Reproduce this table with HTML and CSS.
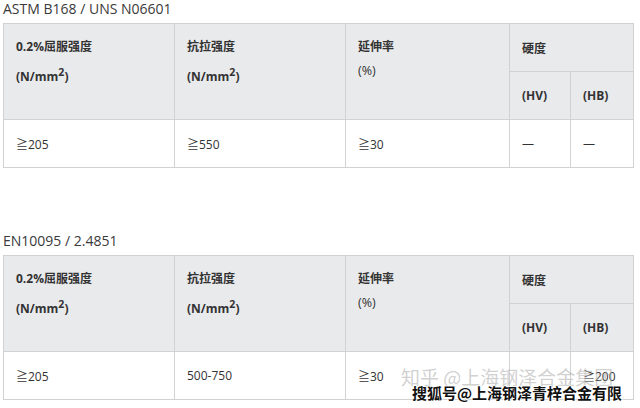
FILE: index.html
```html
<!DOCTYPE html>
<html>
<head>
<meta charset="utf-8">
<link rel="stylesheet" href="styles.css">
</head>
<body>
<div class="page">
  <section class="block">
    <div class="title">ASTM B168 / UNS N06601</div>
    <table class="spec">
      <colgroup><col class="c1"><col class="c2"><col class="c3"><col class="c4"><col class="c5"></colgroup>
      <thead>
        <tr class="r1">
          <th rowspan="2"><div class="l">0.2%屈服强度</div><div class="l u">(N/mm<sup>2</sup>)</div></th>
          <th rowspan="2"><div class="l">抗拉强度</div><div class="l u">(N/mm<sup>2</sup>)</div></th>
          <th rowspan="2"><div class="l">延伸率</div><div class="l pct">(%)</div></th>
          <th colspan="2" class="mid">硬度</th>
        </tr>
        <tr class="r2"><th class="mid">(HV)</th><th class="mid">(HB)</th></tr>
      </thead>
      <tbody>
        <tr class="rb"><td>≧205</td><td>≧550</td><td>≧30</td><td>—</td><td>—</td></tr>
      </tbody>
    </table>
  </section>
  <section class="block second">
    <div class="title">EN10095 / 2.4851</div>
    <table class="spec">
      <colgroup><col class="c1"><col class="c2"><col class="c3"><col class="c4"><col class="c5"></colgroup>
      <thead>
        <tr class="r1">
          <th rowspan="2"><div class="l">0.2%屈服强度</div><div class="l u">(N/mm<sup>2</sup>)</div></th>
          <th rowspan="2"><div class="l">抗拉强度</div><div class="l u">(N/mm<sup>2</sup>)</div></th>
          <th rowspan="2"><div class="l">延伸率</div><div class="l pct">(%)</div></th>
          <th colspan="2" class="mid">硬度</th>
        </tr>
        <tr class="r2"><th class="mid">(HV)</th><th class="mid">(HB)</th></tr>
      </thead>
      <tbody>
        <tr class="rb"><td>≧205</td><td>500-750</td><td>≧30</td><td></td><td>≧200</td></tr>
      </tbody>
    </table>
  </section>
  <div class="wm-gray">知乎 @上海钢泽合金集团</div>
  <div class="wm-black">搜狐号@上海钢泽青梓合金有限</div>
</div>
</body>
</html>
```

FILE: styles.css
```css
html, body {
  margin: 0;
  padding: 0;
  background: #fff;
}
.page {
  position: relative;
  width: 640px;
  height: 408px;
  overflow: hidden;
  padding-left: 3px;
  box-sizing: border-box;
  font-family: "Open Sans", "Noto Sans CJK SC", sans-serif;
  color: #333;
}
.title {
  font-size: 14px;
  line-height: 18px;
  height: 18px;
  margin-bottom: 5px;
  color: #3a3a3a;
}
.second {
  margin-top: 64px;
}
.spec {
  border-collapse: collapse;
  table-layout: fixed;
  width: 631px;
  font-size: 12px;
}
.c1 { width: 171px; }
.c2 { width: 171px; }
.c3 { width: 164px; }
.c4 { width: 61px; }
.c5 { width: 63px; }
.spec th, .spec td {
  border: 1px solid #d2d2d2;
  padding: 0 0 0 12px;
  text-align: left;
}
.spec th {
  background: #e9eaec;
  font-weight: bold;
  vertical-align: top;
  padding-top: 11px;
  color: #333;
}
.spec th.mid {
  vertical-align: middle;
  padding-top: 0;
}
.r1 { height: 48px; }
.r2 { height: 48px; }
.rb { height: 48px; }
.spec td {
  vertical-align: middle;
  font-weight: normal;
  color: #333;
}
.l {
  line-height: 24px;
  white-space: nowrap;
}
.u {
  margin-top: 6px;
}
.pct {
  font-weight: normal;
  font-size: 12.5px;
}
sup {
  font-size: 10.5px;
  line-height: 0;
  vertical-align: 5px;
}
.wm-gray {
  position: absolute;
  left: 401px;
  top: 366px;
  font-size: 19px;
  line-height: 22px;
  color: rgba(170, 170, 170, 0.55);
  font-family: "Noto Sans CJK SC", sans-serif;
  white-space: nowrap;
}
.wm-black {
  position: absolute;
  left: 412px;
  top: 384px;
  font-size: 15px;
  line-height: 18px;
  font-weight: bold;
  color: #111;
  font-family: "Noto Sans CJK SC", sans-serif;
  white-space: nowrap;
  text-shadow: 1px 0 0 #fff, -1px 0 0 #fff, 0 1px 0 #fff, 0 -1px 0 #fff;
}
```
